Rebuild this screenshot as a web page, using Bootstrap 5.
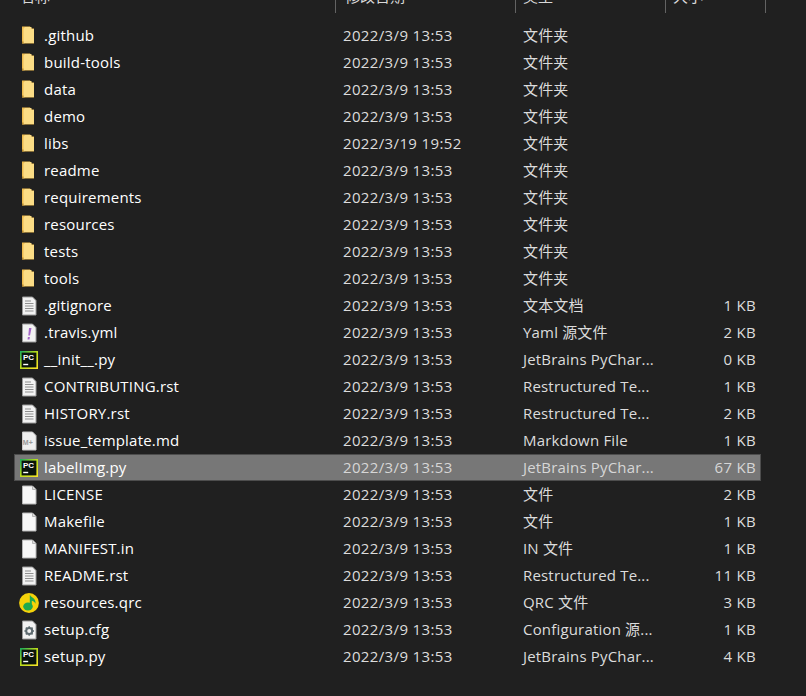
<!DOCTYPE html>
<html lang="zh"><head><meta charset="utf-8"><title>Explorer</title>
<link rel="stylesheet" href="https://cdn.jsdelivr.net/npm/bootstrap@5.3.0/dist/css/bootstrap.min.css">
<style>
html,body{height:696px;overflow:hidden}
body{background:#202020;color:#fff;font-family:"Open Sans","Noto Sans CJK SC",sans-serif;font-size:15px}
.hdr{height:13px;overflow:hidden;color:#d9d9d9}
.hdr>div{height:13px;border-right:1px solid #636363;line-height:20px;flex:none}
.hdr span{display:block;margin-top:-14px}
.c1{width:336px;padding-left:20px}.c2{width:180px;padding-left:9px}.c3{width:150px;padding-left:7px}.c4{width:100px;padding-left:7px}
.lst{margin:9px 0 0 14px;width:747px}
.rw{height:27px;line-height:27px;white-space:nowrap}
.rw .nm{width:321px;flex:none;padding-left:5px;color:#fff;letter-spacing:.2px}
.rw .dt{width:180px;flex:none;color:#dcdcdc;padding-left:8px;letter-spacing:.36px}
.rw .ty{width:150px;flex:none;color:#dcdcdc;padding-left:8px;letter-spacing:.18px}
.rw .sz{width:96px;flex:none;color:#dcdcdc;text-align:right;padding-right:5px;letter-spacing:.3px}
.rw svg{width:20px;height:20px;margin-right:5px;vertical-align:-5px}
.sel{background:#777;outline:1px solid #4d4d4d;outline-offset:-1px}
.sel .dt,.sel .ty,.sel .sz{color:#d6d6d6}
.pclbl{font:700 8px "Liberation Sans",sans-serif;fill:#fff;letter-spacing:0}
.mdlbl{font:700 7px "Liberation Sans",sans-serif;fill:#9a9a9a;letter-spacing:0}
</style></head><body>
<svg width="0" height="0" class="position-absolute">
<defs>
<linearGradient id="pg" x1="0" y1="0" x2="1" y2="1"><stop offset="0" stop-color="#1fae5a"/><stop offset=".45" stop-color="#b6dc1c"/><stop offset="1" stop-color="#f6e528"/></linearGradient>
<symbol id="fo" viewBox="0 0 20 20"><path d="M3 .5h8l1.500 2H15V17.500H3z" fill="#eebb4e"/><path d="M6 1h6.500v2H15v14H6l-1.500.5V2.500z" fill="#fbdc85"/><path d="M3 15.500h1.500v2H3z" fill="#b88a2e"/></symbol>
<symbol id="tx" viewBox="0 0 20 20"><path d="M3.500 1h10l3.500 3.500V19H3.500z" fill="#f2f2f2" stroke="#9a9a9a"/><path d="M6 5h6M6 7.500h8.500M6 10h8.500M6 12.500h8.500M6 15h8.500" stroke="#8f8f8f"/></symbol>
<symbol id="ya" viewBox="0 0 20 20"><path d="M3.500 1h10l3.500 3.500V19H3.500z" fill="#f2f2f2" stroke="#9a9a9a"/><path d="M10 5h2.500L11 12.500H9.300z M8.900 14h2l-.4 2.500H8.500z" fill="#a566c8"/></symbol>
<symbol id="pc" viewBox="0 0 20 20"><rect x="1.800" y="1.800" width="16.400" height="16.400" fill="#0a140c" stroke="url(#pg)" stroke-width="1.600"/><text x="4" y="10" class="pclbl">PC</text><path d="M4.200 14.500h5" stroke="#fff" stroke-width="1.400"/></symbol>
<symbol id="bl" viewBox="0 0 20 20"><path d="M3.500 1h10l3.500 3.500V19H3.500z" fill="#f7f7f7" stroke="#b5b5b5"/><path d="M13.500 1v3.500H17" fill="#dcdcdc" stroke="#b5b5b5"/></symbol>
<symbol id="md" viewBox="0 0 20 20"><path d="M3.500 1h10l3.500 3.500V19H3.500z" fill="#efefef" stroke="#c9c9c9"/><text x="3.800" y="13.500" class="mdlbl">M+</text></symbol>
<symbol id="qr" viewBox="0 0 20 20"><circle cx="10" cy="10" r="9.900" fill="#f5d20a"/><ellipse cx="9" cy="13.500" rx="4.800" ry="4" fill="#1eaa4f"/><path d="M10.800 13.500V1.800c1.500 3 6.500 3.500 5.700 9-1.200-2.500-2.700-3-3.700-3.100v5.800z" fill="#1eaa4f"/></symbol>
<symbol id="cf" viewBox="0 0 20 20"><path d="M3.500 1h10l3.500 3.500V19H3.500z" fill="#f2f2f2" stroke="#9a9a9a"/><circle cx="10.200" cy="11" r="3" fill="none" stroke="#5f6b70" stroke-width="2"/><path d="M10.200 6.200v2M10.200 13.800v2M5.400 11h2M13 11h2M6.800 7.600l1.400 1.400M12.200 13l1.400 1.400M13.600 7.600 12.200 9M8.200 13l-1.400 1.400" stroke="#5f6b70" stroke-width="1.500"/></symbol>
</defs></svg>
<div class="hdr d-flex"><div class="c1"><span>名称</span></div><div class="c2"><span>修改日期</span></div><div class="c3"><span>类型</span></div><div class="c4"><span>大小</span></div></div>
<div class="lst" id="l"></div>
<script>
var d=[["fo",".github","2022/3/9 13:53","文件夹",""],["fo","build-tools","2022/3/9 13:53","文件夹",""],["fo","data","2022/3/9 13:53","文件夹",""],["fo","demo","2022/3/9 13:53","文件夹",""],["fo","libs","2022/3/19 19:52","文件夹",""],["fo","readme","2022/3/9 13:53","文件夹",""],["fo","requirements","2022/3/9 13:53","文件夹",""],["fo","resources","2022/3/9 13:53","文件夹",""],["fo","tests","2022/3/9 13:53","文件夹",""],["fo","tools","2022/3/9 13:53","文件夹",""],["tx",".gitignore","2022/3/9 13:53","文本文档","1 KB"],["ya",".travis.yml","2022/3/9 13:53","Yaml 源文件","2 KB"],["pc","__init__.py","2022/3/9 13:53","JetBrains PyChar...","0 KB"],["tx","CONTRIBUTING.rst","2022/3/9 13:53","Restructured Te...","1 KB"],["tx","HISTORY.rst","2022/3/9 13:53","Restructured Te...","2 KB"],["md","issue_template.md","2022/3/9 13:53","Markdown File","1 KB"],["pc","labelImg.py","2022/3/9 13:53","JetBrains PyChar...","67 KB"],["bl","LICENSE","2022/3/9 13:53","文件","2 KB"],["bl","Makefile","2022/3/9 13:53","文件","1 KB"],["bl","MANIFEST.in","2022/3/9 13:53","IN 文件","1 KB"],["tx","README.rst","2022/3/9 13:53","Restructured Te...","11 KB"],["qr","resources.qrc","2022/3/9 13:53","QRC 文件","3 KB"],["cf","setup.cfg","2022/3/9 13:53","Configuration 源...","1 KB"],["pc","setup.py","2022/3/9 13:53","JetBrains PyChar...","4 KB"]];
document.getElementById('l').innerHTML=d.map(function(r){return '<div class="rw d-flex'+(r[1]=="labelImg.py"?' sel':'')+'"><div class="nm"><svg><use href="#'+r[0]+'"/></svg>'+r[1]+'</div><div class="dt">'+r[2]+'</div><div class="ty">'+r[3]+'</div><div class="sz">'+r[4]+'</div></div>'}).join('');
</script>
<script src="https://cdn.jsdelivr.net/npm/bootstrap@5.3.0/dist/js/bootstrap.bundle.min.js"></script>
</body></html>
